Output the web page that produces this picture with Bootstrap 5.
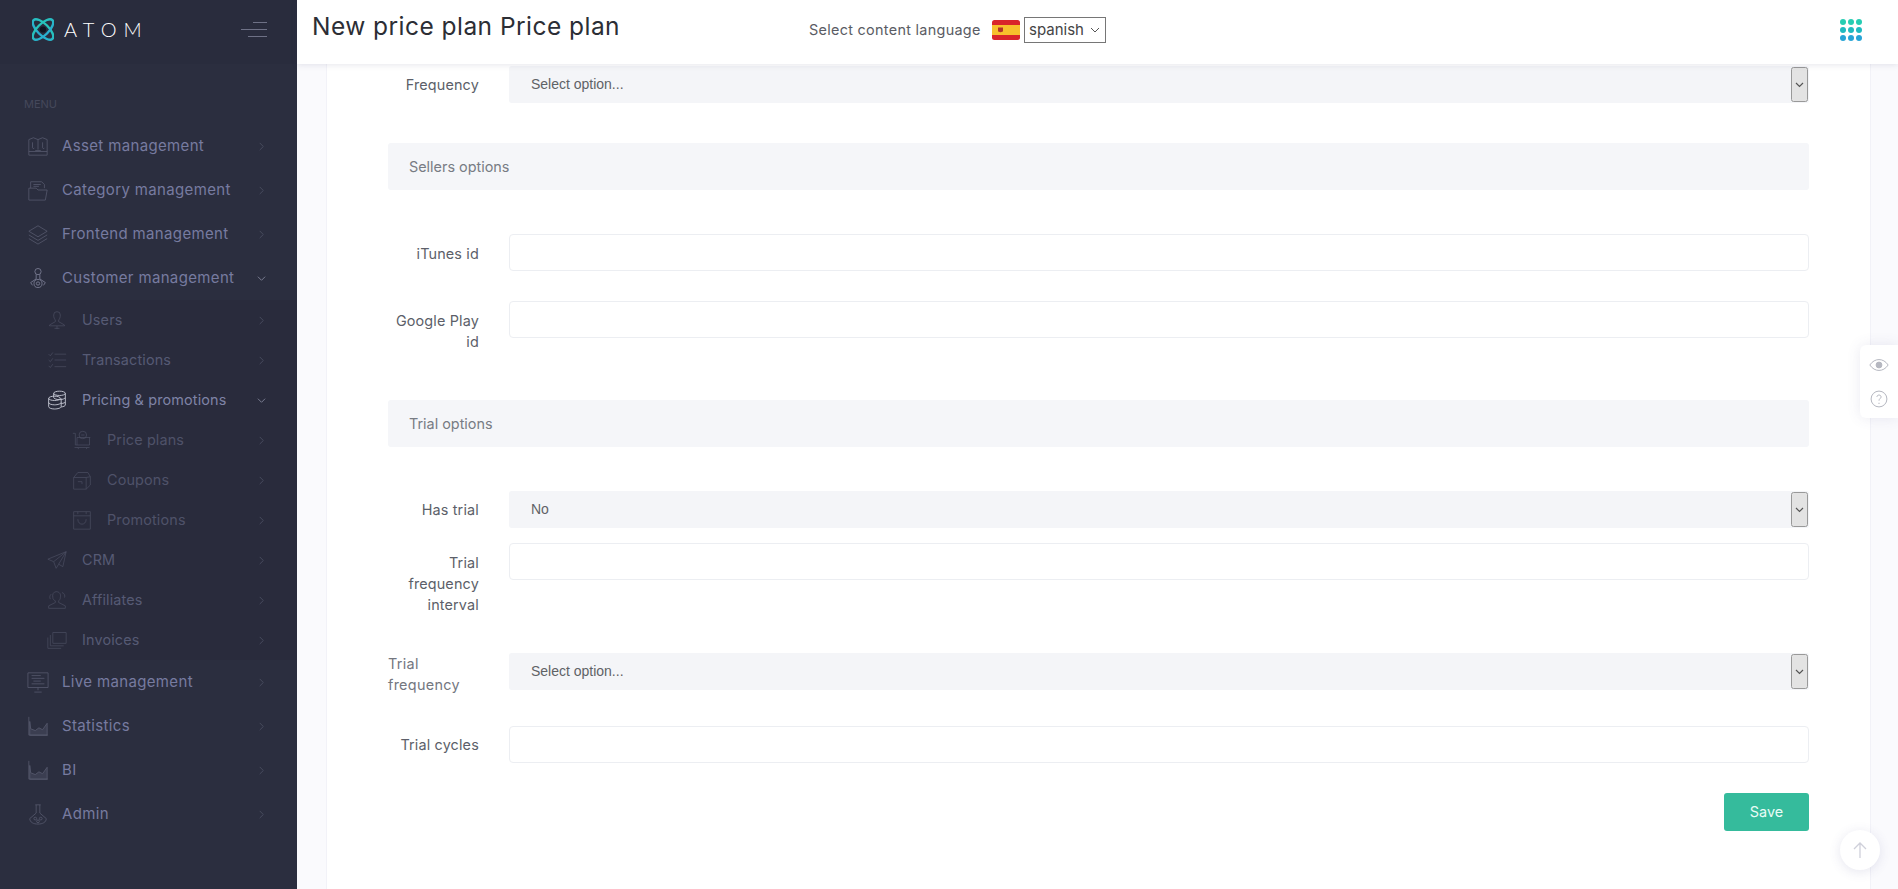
<!DOCTYPE html>
<html lang="en">
<head>
    <meta charset="UTF-8">
    <meta name="viewport" content="width=device-width, initial-scale=1.0">
    <title>New price plan</title>
    <link href="https://cdn.jsdelivr.net/npm/bootstrap@5.3.0/dist/css/bootstrap.min.css" rel="stylesheet">
    <style>
        html, body { height: 100%; }
        body {
            font-family: Inter, "Liberation Sans", sans-serif;
            background: #fafafd;
            overflow: hidden;
            color: #5c5f69;
        }
        .side-panel { width: 297px; background: #2b2e3f; flex-shrink: 0; }
        .brand-bar { height: 64px; background: #292c3d; padding: 0 30px 6px 32px; }
        .brand-name { font-family: Lato, sans-serif; font-weight: 300; font-size: 20px; letter-spacing: 7.1px; color: #fff; margin-left: 10px; line-height: 1; }
        .burger { width: 26px; }
        .burger span { display: block; height: 1px; background: #6e7186; margin-left: auto; margin-bottom: 6px; }
        .burger span:nth-child(1) { width: 14px; }
        .burger span:nth-child(2) { width: 26px; }
        .burger span:nth-child(3) { width: 19px; margin-bottom: 0; }
        .menu-title { font-size: 11px; color: #45485b; padding: 33px 0 0 24px; height: 60px; line-height: 14px; }
        .menu-link { display: flex; align-items: center; height: 44px; padding: 0 31px 0 27px; color: #777ba0; text-decoration: none; font-size: 15px; letter-spacing: .35px; }
        .menu-link .ico { width: 22px; height: 22px; margin-right: 13px; color: #5a5d72; flex-shrink: 0; }
        .menu-link .chev { width: 9px; height: 9px; margin-left: auto; color: #4b4e61; flex-shrink: 0; }
        .menu-link .chev.open { color: #81849a; }
        .sub-menu { background: #292b3c; }
        .sub-menu .menu-link { height: 40px; padding-left: 47px; color: #565a74; font-size: 14.4px; letter-spacing: .15px; }
        .sub-menu .menu-link .ico { width: 20px; height: 20px; margin-right: 15px; color: #4d5064; }
        .sub-menu .menu-link.on { color: #7f83a6; }
        .sub-menu .menu-link.on .ico { color: #c5c7d3; }
        .sub-menu .deep .menu-link { padding-left: 72px; color: #4f5269; }
        .top-bar { height: 64px; background: #fff; box-shadow: 0 1px 6px rgba(60, 60, 100, .13); padding: 0 36px 4px 15px; position: relative; z-index: 2; flex-shrink: 0; }
        .page-title { font-size: 24.5px; font-weight: 400; color: #2c2e35; margin: 0 0 6px; width: 497px; letter-spacing: .46px; }
        .lang-label { font-size: 14.4px; color: #5a5c64; width: 183px; letter-spacing: .3px; }
        .lang-select {
            width: 82px; height: 26px; border: 1px solid #767676; border-radius: 0; background-color: #fff; font-size: 15px; color: #444;
            padding: 0 4px; margin-left: 4px; font-family: inherit; appearance: none;
            background-image: url("data:image/svg+xml,%3Csvg xmlns='http://www.w3.org/2000/svg' width='10' height='6'%3E%3Cpath d='M1 1l4 4 4-4' fill='none' stroke='%23555'/%3E%3C/svg%3E");
            background-repeat: no-repeat; background-position: right 5px center;
        }
        .dots-grid { display: grid; grid-template-columns: repeat(3, 6px); gap: 2px; }
        .dots-grid i { height: 6px; width: 6px; border-radius: 50%; display: block; }
        .dot-a { background: #26cdb3; }
        .dot-b { background: #20bac0; }
        .dot-c { background: #27a4d6; }
        .main-area { padding: 0 27px 0 29px; overflow: hidden; }
        .sheet { background: #fff; border: 1px solid #f2f2f8; border-width: 0 1px; padding: 1px 61px 0; height: 100%; }
        .field-row { --bs-gutter-x: 30px; margin-bottom: 30px; }
        .field-label { font-size: 14.4px; line-height: 21px; color: #5c5f69; text-align: right; padding-top: 8px; letter-spacing: .15px; }
        .field-label.lower { padding-top: 9px; }
        .field-label.flat { text-align: left; padding-top: 0; color: #74777f; letter-spacing: .3px; }
        .field-input { height: 37px; border: 1px solid #eceef2; border-radius: 4px; box-shadow: none; }
        .field-select {
            height: 37px; border: 0; border-radius: 3px; background-color: #f4f5f8; color: #5f6266;
            font-family: "Liberation Sans", sans-serif; font-size: 14px; padding: 0 22px;
            background-image: url("data:image/svg+xml,%3Csvg xmlns='http://www.w3.org/2000/svg' width='17' height='35'%3E%3Crect x='.5' y='.5' width='16' height='34' rx='2' fill='%23e3e3e3' stroke='%23999'/%3E%3Cpath d='M5 16l3.5 3.5L12 16' fill='none' stroke='%23555' stroke-width='1.2'/%3E%3C/svg%3E");
            background-repeat: no-repeat; background-position: right 1px center; background-size: 17px 35px;
        }
        .section-band { height: 47px; background: #f5f6f9; border-radius: 3px; padding-left: 21px; display: flex; align-items: center; font-size: 14.4px; color: #787c84; }
        .band-a, .band-b { margin-bottom: 44px; }
        .freq-row { margin-top: 1px; margin-bottom: 40px; }
        .google-row { margin-bottom: 48px; }
        .tight-row { margin-bottom: 15px; }
        .interval-row { margin-bottom: 38px; }
        .trial-freq-row { margin-bottom: 31px; }
        .save-btn { width: 85px; height: 38px; background: #35bb9c; border: 0; color: #e9fbf6; font-size: 14.4px; border-radius: 3px; padding: 0; }
        .side-tools { position: fixed; right: 0; top: 345px; width: 38px; height: 73px; background: #fff; border-radius: 6px 0 0 6px; box-shadow: 0 0 14px rgba(80, 80, 140, .12); gap: 14px; }
        .side-tools svg { width: 20px; height: 20px; color: #b5b7c0; }
        .to-top { position: fixed; left: 1840px; top: 830px; width: 40px; height: 40px; border-radius: 50%; background: #fff; box-shadow: 0 2px 12px rgba(80, 80, 140, .14); }
        .to-top svg { width: 16px; height: 18px; color: #cfd0da; }
    </style>
</head>
<body class="d-flex">
    <svg width="0" height="0" class="position-absolute">
        <defs>
            <linearGradient id="atomGrad" gradientUnits="userSpaceOnUse" x1="12" y1="0" x2="12" y2="24"><stop offset="0" stop-color="#25cdb0"/><stop offset="1" stop-color="#2aa5da"/></linearGradient>
            <symbol id="i-chev-r" viewBox="0 0 10 10"><path d="M3 1l4 4-4 4" fill="none" stroke="currentColor"/></symbol>
            <symbol id="i-chev-d" viewBox="0 0 10 10"><path d="M1 3l4 4 4-4" fill="none" stroke="currentColor"/></symbol>
            <symbol id="i-asset" viewBox="0 0 24 24"><g fill="none" stroke="currentColor" stroke-width=".8"><path d="M2 5l5-2 5 2 5-2 5 2v17H2z"/><path d="M2 18h20M12 5v11M6 8v6l1 1 1-1M17 8v6l1 1 1-1M9 17h6"/></g></symbol>
            <symbol id="i-folder" viewBox="0 0 24 24"><g fill="none" stroke="currentColor" stroke-width=".8"><path d="M4 10V3h12l3 3v4M7 6h8M7 8h6"/><path d="M2 23V10h8l2 2h10l-2 11z"/></g></symbol>
            <symbol id="i-layers" viewBox="0 0 24 24"><g fill="none" stroke="currentColor" stroke-width=".8"><path d="M12 3l10 6-10 6L2 9z"/><path d="M2 13l10 6 10-6M2 17l10 6 10-6"/></g></symbol>
            <symbol id="i-flask" viewBox="0 0 24 24"><g fill="none" stroke="#7d8096" stroke-width=".9"><circle cx="12" cy="5" r="3.4"/><path d="M10 8v5l-6 4 2 3M14 8v5l6 4-2 3"/><circle cx="12" cy="18" r="4.4"/><circle cx="12" cy="18" r="1.8"/></g></symbol>
            <symbol id="i-user" viewBox="0 0 24 24"><g fill="none" stroke="currentColor" stroke-width=".8"><path d="M8 6a4 4 0 018 0c0 3-1 5-2 6v2l7 4v1H3v-1l7-4v-2c-1-1-2-3-2-6z"/><path d="M12 19v4M9 22h6"/></g></symbol>
            <symbol id="i-checks" viewBox="0 0 24 24"><g fill="none" stroke="currentColor" stroke-width=".8"><path d="M2 5l2 2 3-4M2 12l2 2 3-4M2 19l2 2 3-4M9 5h14M9 12h14M9 20h14"/></g></symbol>
            <symbol id="i-coins" viewBox="0 0 24 24"><g fill="none" stroke="currentColor" stroke-width="1.1"><ellipse cx="15" cy="4" rx="7" ry="2.6"/><path d="M8 4v5c0 1 3 2.600 7 2.600s7-1.600 7-2.600V4M22 9v5c0 1-2 2-5 2.400M22 14v4c0 1-2 2-5 2.400"/><ellipse cx="9" cy="10" rx="7" ry="2.600"/><path d="M2 10v10c0 1.500 3 2.800 7 2.800s8-1.300 8-2.800V10M2 15c0 1.500 3 2.800 7 2.800s8-1.300 8-2.800"/></g></symbol>
            <symbol id="i-cart" viewBox="0 0 24 24"><g fill="none" stroke="currentColor" stroke-width=".8"><path d="M1 4h3v14h17v-9"/><path d="M6 18V9h16M3 21h18"/><circle cx="13" cy="6" r="4.500"/><path d="M11 6h4M7 21l1 2M18 21l-1 2"/></g></symbol>
            <symbol id="i-box" viewBox="0 0 24 24"><g fill="none" stroke="currentColor" stroke-width=".8"><path d="M2 9h15v14H2zM2 9l5-6h12l3 5-5 1M17 23l5-5V8"/><path d="M7 14h5v3"/></g></symbol>
            <symbol id="i-bag" viewBox="0 0 24 24"><g fill="none" stroke="currentColor" stroke-width=".8"><path d="M2 2h20v21H2zM2 7h20"/><path d="M7 2v3M17 2v3M7 11c0 8 10 8 10 0"/></g></symbol>
            <symbol id="i-plane" viewBox="0 0 24 24"><g fill="none" stroke="currentColor" stroke-width=".8"><path d="M23 2L1 11l7 3 3 8 3-5 5 3zM23 2L8 14M23 2l-9 15"/></g></symbol>
            <symbol id="i-users" viewBox="0 0 24 24"><g fill="none" stroke="currentColor" stroke-width=".8"><path d="M11 2c4 0 6 3 5 7 0 2-1 3-2 4v2l8 4v3H2v-3l8-4v-2c-2-1-3-2-3-4-1-4 1-7 4-7z"/><path d="M18 3c3 1 4 4 3 6"/><path d="M5 5C3 7 3 9 4 11"/></g></symbol>
            <symbol id="i-stack" viewBox="0 0 24 24"><g fill="none" stroke="currentColor" stroke-width=".8"><path d="M7 3h16v13H7zM4 6v13h16M1 9v13h16"/></g></symbol>
            <symbol id="i-screen" viewBox="0 0 24 24"><g fill="none" stroke="currentColor" stroke-width=".8"><path d="M1 2h22v16H1zM5 5h10M5 8h14M7 11h8M5 14h14M12 18v3M8 23h8"/></g></symbol>
            <symbol id="i-chart" viewBox="0 0 24 24"><g stroke="currentColor" stroke-width=".8"><path d="M2 2v20h21" fill="none"/><path d="M3 7l1 8 5 2 4-3 4 2 5-7v13H3z" fill="currentColor" fill-opacity=".35"/></g></symbol>
            <symbol id="i-beaker" viewBox="0 0 24 24"><g fill="none" stroke="currentColor" stroke-width=".8"><path d="M9 2h6M10 2v9L3 17c0 4 4 6 9 6s9-2 9-6l-7-6V2"/><circle cx="9" cy="17" r="1.500"/><circle cx="15" cy="17" r="1.500"/><circle cx="12" cy="20" r="1.500"/></g></symbol>
        </defs>
    </svg>

    <aside class="side-panel">
        <div class="brand-bar d-flex align-items-center">
            <svg width="22" height="23" viewBox="0 0 24 24" fill="none" stroke="url(#atomGrad)" stroke-width="2.600">
                <ellipse cx="12" cy="12" rx="14.500" ry="6.200" transform="rotate(45 12 12)"/>
                <ellipse cx="12" cy="12" rx="14.500" ry="6.200" transform="rotate(-45 12 12)"/>
                <circle cx="12" cy="12" r="3.400" fill="#0f1420" stroke="none"/>
            </svg>
            <span class="brand-name">ATOM</span>
            <div class="burger ms-auto"><span></span><span></span><span></span></div>
        </div>
        <div class="menu-title">MENU</div>
        <nav>
            <a class="menu-link" href="#"><svg class="ico"><use href="#i-asset"/></svg>Asset management<svg class="chev"><use href="#i-chev-r"/></svg></a>
            <a class="menu-link" href="#"><svg class="ico"><use href="#i-folder"/></svg>Category management<svg class="chev"><use href="#i-chev-r"/></svg></a>
            <a class="menu-link" href="#"><svg class="ico"><use href="#i-layers"/></svg>Frontend management<svg class="chev"><use href="#i-chev-r"/></svg></a>
            <a class="menu-link" href="#"><svg class="ico"><use href="#i-flask"/></svg>Customer management<svg class="chev open"><use href="#i-chev-d"/></svg></a>
            <div class="sub-menu">
                <a class="menu-link" href="#"><svg class="ico"><use href="#i-user"/></svg>Users<svg class="chev"><use href="#i-chev-r"/></svg></a>
                <a class="menu-link" href="#"><svg class="ico"><use href="#i-checks"/></svg>Transactions<svg class="chev"><use href="#i-chev-r"/></svg></a>
                <a class="menu-link on" href="#"><svg class="ico"><use href="#i-coins"/></svg>Pricing &amp; promotions<svg class="chev open"><use href="#i-chev-d"/></svg></a>
                <div class="deep">
                    <a class="menu-link" href="#"><svg class="ico"><use href="#i-cart"/></svg>Price plans<svg class="chev"><use href="#i-chev-r"/></svg></a>
                    <a class="menu-link" href="#"><svg class="ico"><use href="#i-box"/></svg>Coupons<svg class="chev"><use href="#i-chev-r"/></svg></a>
                    <a class="menu-link" href="#"><svg class="ico"><use href="#i-bag"/></svg>Promotions<svg class="chev"><use href="#i-chev-r"/></svg></a>
                </div>
                <a class="menu-link" href="#"><svg class="ico"><use href="#i-plane"/></svg>CRM<svg class="chev"><use href="#i-chev-r"/></svg></a>
                <a class="menu-link" href="#"><svg class="ico"><use href="#i-users"/></svg>Affiliates<svg class="chev"><use href="#i-chev-r"/></svg></a>
                <a class="menu-link" href="#"><svg class="ico"><use href="#i-stack"/></svg>Invoices<svg class="chev"><use href="#i-chev-r"/></svg></a>
            </div>
            <a class="menu-link" href="#"><svg class="ico"><use href="#i-screen"/></svg>Live management<svg class="chev"><use href="#i-chev-r"/></svg></a>
            <a class="menu-link" href="#"><svg class="ico"><use href="#i-chart"/></svg>Statistics<svg class="chev"><use href="#i-chev-r"/></svg></a>
            <a class="menu-link" href="#"><svg class="ico"><use href="#i-chart"/></svg>BI<svg class="chev"><use href="#i-chev-r"/></svg></a>
            <a class="menu-link" href="#"><svg class="ico"><use href="#i-beaker"/></svg>Admin<svg class="chev"><use href="#i-chev-r"/></svg></a>
        </nav>
    </aside>

    <div class="flex-grow-1 d-flex flex-column">
        <header class="top-bar d-flex align-items-center">
            <h1 class="page-title">New price plan Price plan</h1>
            <span class="lang-label">Select content language</span>
            <svg width="28" height="20" viewBox="0 0 28 20">
                <rect width="28" height="20" rx="2.500" fill="#d9252a"/>
                <rect y="5" width="28" height="10" fill="#f7c02c"/>
                <path d="M6 7.500h5v3.500c0 1.500-5 1.500-5 0z" fill="#b3322a"/>
            </svg>
            <select class="lang-select"><option>spanish</option></select>
            <div class="dots-grid ms-auto">
                <i class="dot-a"></i><i class="dot-a"></i><i class="dot-a"></i>
                <i class="dot-b"></i><i class="dot-b"></i><i class="dot-b"></i>
                <i class="dot-c"></i><i class="dot-c"></i><i class="dot-c"></i>
            </div>
        </header>

        <main class="main-area flex-grow-1">
            <div class="sheet">
                <form>
                    <div class="row field-row freq-row">
                        <label class="col-1 field-label">Frequency</label>
                        <div class="col-11"><select class="form-select field-select"><option>Select option...</option></select></div>
                    </div>
                    <div class="section-band band-a">Sellers options</div>
                    <div class="row field-row">
                        <label class="col-1 field-label lower">iTunes id</label>
                        <div class="col-11"><input type="text" class="form-control field-input"></div>
                    </div>
                    <div class="row field-row google-row">
                        <label class="col-1 field-label lower">Google Play id</label>
                        <div class="col-11"><input type="text" class="form-control field-input"></div>
                    </div>
                    <div class="section-band band-b">Trial options</div>
                    <div class="row field-row tight-row">
                        <label class="col-1 field-label">Has trial</label>
                        <div class="col-11"><select class="form-select field-select"><option>No</option></select></div>
                    </div>
                    <div class="row field-row interval-row">
                        <label class="col-1 field-label lower">Trial frequency interval</label>
                        <div class="col-11"><input type="text" class="form-control field-input"></div>
                    </div>
                    <div class="row field-row trial-freq-row">
                        <label class="col-1 field-label flat">Trial frequency</label>
                        <div class="col-11"><select class="form-select field-select"><option>Select option...</option></select></div>
                    </div>
                    <div class="row field-row">
                        <label class="col-1 field-label">Trial cycles</label>
                        <div class="col-11"><input type="text" class="form-control field-input"></div>
                    </div>
                    <div class="d-flex justify-content-end">
                        <button type="button" class="btn save-btn">Save</button>
                    </div>
                </form>
            </div>
        </main>
    </div>

    <div class="side-tools d-flex flex-column align-items-center justify-content-center">
        <svg viewBox="0 0 24 24" fill="none" stroke="currentColor" stroke-width="1.200"><path d="M1 12c3-4.500 7-6.500 11-6.500s8 2 11 6.500c-3 4.500-7 6.500-11 6.500S4 16.500 1 12z"/><circle cx="12" cy="12" r="3.500" fill="currentColor"/></svg>
        <svg viewBox="0 0 24 24" fill="none" stroke="currentColor" stroke-width="1.200"><circle cx="12" cy="12" r="9.500"/><path d="M9.500 9.500c0-3 5-3 5 0 0 2-2.500 2-2.500 4.500M12 16.500v1.500"/></svg>
    </div>
    <div class="to-top d-flex align-items-center justify-content-center">
        <svg viewBox="0 0 16 18" fill="none" stroke="currentColor" stroke-width="1.300"><path d="M8 17V2M2 8l6-6 6 6"/></svg>
    </div>

    <script src="https://cdn.jsdelivr.net/npm/bootstrap@5.3.0/dist/js/bootstrap.bundle.min.js"></script>
</body>
</html>
